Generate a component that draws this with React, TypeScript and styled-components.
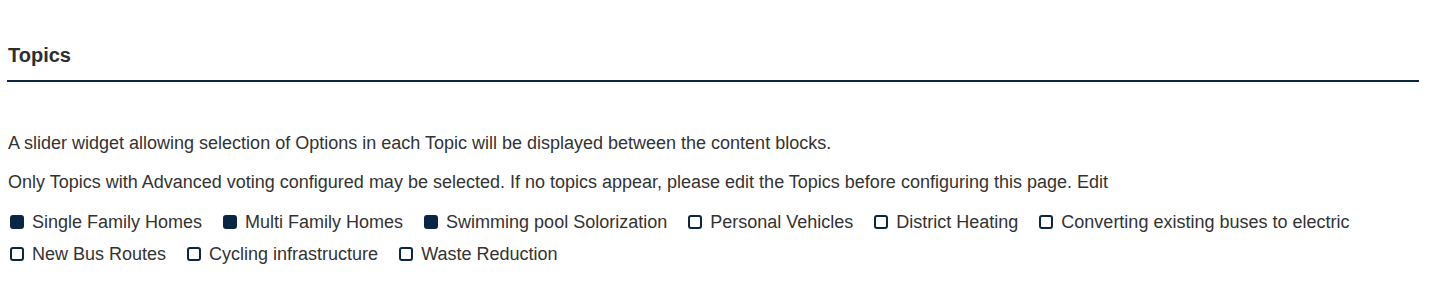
import React from "react";
import styled, { createGlobalStyle } from "styled-components";

const Global = createGlobalStyle`
  html, body { margin: 0; padding: 0; background: #fff; }
  body { font-family: "Liberation Sans", Arial, sans-serif; color: #333; }
`;

const Page = styled.div`
  padding: 0 22px 0 7px;
`;

const Header = styled.div`
  padding-top: 44px;
  border-bottom: 2px solid #0b2545;
  height: 36px;
  box-sizing: content-box;
`;

const Title = styled.h2`
  margin: 0 0 0 1px;
  font-size: 20px;
  font-weight: 700;
  line-height: 22px;
  color: #2e2e2e;
`;

const Body = styled.div`
  padding: 50px 0 0 1px;
`;

const Para = styled.p`
  margin: 0 0 17px;
  font-size: 18px;
  line-height: 22px;
  color: #333;
  & + & {
    margin-bottom: 18px;
  }
`;

const Options = styled.div`
  display: flex;
  flex-wrap: wrap;
  row-gap: 10px;
`;

const Item = styled.label`
  display: inline-flex;
  align-items: center;
  margin-right: 19px;
  font-size: 18px;
  line-height: 22px;
  color: #333;
`;

const Box = styled.span<{ $checked: boolean }>`
  flex: none;
  width: 14px;
  height: 14px;
  box-sizing: border-box;
  margin: 0 8px 0 2px;
  border-radius: 3px;
  border: 2px solid #0b2545;
  background: ${(p) => (p.$checked ? "#0b2545" : "#fff")};
`;

const topics: [string, boolean][] = [
  ["Single Family Homes", true],
  ["Multi Family Homes", true],
  ["Swimming pool Solorization", true],
  ["Personal Vehicles", false],
  ["District Heating", false],
  ["Converting existing buses to electric", false],
  ["New Bus Routes", false],
  ["Cycling infrastructure", false],
  ["Waste Reduction", false],
];

export default function App() {
  return (
    <Page>
      <Global />
      <Header>
        <Title>Topics</Title>
      </Header>
      <Body>
        <Para>A slider widget allowing selection of Options in each Topic will be displayed between the content blocks.</Para>
        <Para>Only Topics with Advanced voting configured may be selected. If no topics appear, please edit the Topics before configuring this page. Edit</Para>
        <Options>
          {topics.map(([name, checked]) => (
            <Item key={name}>
              <Box $checked={checked} />
              {name}
            </Item>
          ))}
        </Options>
      </Body>
    </Page>
  );
}
